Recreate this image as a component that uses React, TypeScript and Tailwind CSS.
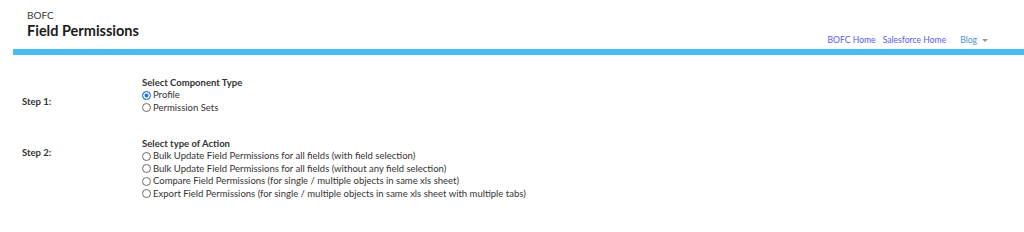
const actions = [
  'Bulk Update Field Permissions for all fields (with field selection)',
  'Bulk Update Field Permissions for all fields (without any field selection)',
  'Compare Field Permissions (for single / multiple objects in same xls sheet)',
  'Export Field Permissions (for single / multiple objects in same xls sheet with multiple tabs)',
]

function Radio({ checked = false }: { checked?: boolean }) {
  return (
    <span
      className={
        checked
          ? 'inline-block h-[9px] w-[9px] shrink-0 rounded-full border border-[#1a73e8] bg-[#1a73e8] shadow-[inset_0_0_0_1.5px_white]'
          : 'inline-block h-[9px] w-[9px] shrink-0 rounded-full border border-[#6b6b6b] bg-white'
      }
    />
  )
}

function Option({ label, checked }: { label: string; checked?: boolean }) {
  return (
    <label className="flex h-[12.5px] items-center gap-[2px]">
      <Radio checked={checked} />
      <span>{label}</span>
    </label>
  )
}

export default function App() {
  return (
    <div className="h-[232px] w-[1024px] bg-white font-['Lato',sans-serif] text-[9.5px] text-[#333]">
      <header className="flex h-[49px] justify-between pl-[27px] pr-[36px]">
        <div className="pt-[9px]">
          <div className="text-[10px] leading-[12px] text-[#3a3a3a]">BOFC</div>
          <h1 className="text-[14.5px] font-bold leading-[20px] text-[#1b1b1b]">Field Permissions</h1>
        </div>
        <nav className="flex items-center gap-[7px] self-end pb-[2px] text-[8.6px] leading-[14px]">
          <a className="text-[#5a5bf0]">BOFC Home</a>
          <a className="text-[#5a5bf0]">Salesforce Home</a>
          <a className="ml-[7px] flex items-center gap-[5px] text-[#4a8fdc]">
            Blog
            <span className="mt-[1px] inline-block h-0 w-0 border-x-[3px] border-t-[3px] border-x-transparent border-t-[#9a9a9a]" />
          </a>
        </nav>
      </header>
      <div className="ml-[13px] h-[6px] bg-[#45bdf0]" />

      <section className="mt-[21px] flex">
        <div className="w-[142px] pl-[22px] pt-[19px] font-bold">Step 1:</div>
        <div>
          <div className="font-bold leading-[13px]">Select Component Type</div>
          <Option label="Profile" checked />
          <Option label="Permission Sets" />
        </div>
      </section>

      <section className="mt-[23px] flex">
        <div className="w-[142px] pl-[22px] pt-[9px] font-bold">Step 2:</div>
        <div>
          <div className="font-bold leading-[13px]">Select type of Action</div>
          {actions.map((a) => (
            <Option key={a} label={a} />
          ))}
        </div>
      </section>
    </div>
  )
}
